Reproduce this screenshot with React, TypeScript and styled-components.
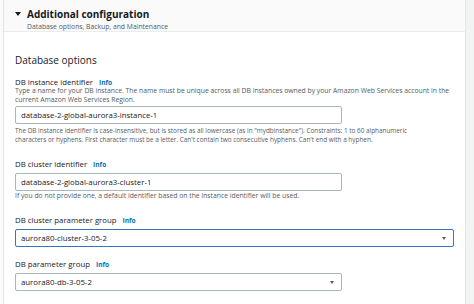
import { FC } from 'react';
import styled, { createGlobalStyle } from 'styled-components';

const GlobalStyle = createGlobalStyle`
  html, body {
    margin: 0;
    padding: 0;
    background: #f2f3f3;
  }
  body {
    font-family: 'Open Sans', 'Noto Sans', Arial, sans-serif;
    color: #16191f;
  }
`;

const Page = styled.div`
  display: flex;
  height: 304px;
  padding: 0 9px 0 3px;
  background: linear-gradient(to right, #fafafa 0, #fafafa 3px, #f2f3f3 3px);
  overflow: hidden;
`;

const Panel = styled.section`
  flex: 1;
  display: flex;
  flex-direction: column;
  background: #ffffff;
  border-left: 1px solid #e4e7e7;
  border-right: 1px solid #e4e7e7;
`;

const Header = styled.header`
  display: flex;
  align-items: flex-start;
  gap: 6px;
  height: 43px;
  box-sizing: border-box;
  padding: 8px 11px 0 11px;
  background: #fafafa;
  border-bottom: 1px solid #eaeded;
`;

const Caret = styled.span`
  width: 0;
  height: 0;
  margin-top: 4px;
  border-left: 3px solid transparent;
  border-right: 3px solid transparent;
  border-top: 4px solid #16191f;
`;

const HeaderText = styled.div`
  display: flex;
  flex-direction: column;
`;

const Title = styled.h2`
  margin: 0;
  font-size: 10px;
  line-height: 13px;
  font-weight: 700;
  color: #16191f;
`;

const Subtitle = styled.p`
  margin: 1px 0 0;
  font-size: 6.8px;
  line-height: 9px;
  color: #545b64;
`;

const Body = styled.div`
  display: flex;
  flex-direction: column;
  padding: 21px 11px 0 11px;
`;

const SectionTitle = styled.h3`
  margin: 0 0 11px;
  font-size: 10px;
  line-height: 14px;
  font-weight: 400;
  color: #16191f;
`;

const Field = styled.div<{ $gap?: number }>`
  display: flex;
  flex-direction: column;
  margin-bottom: ${(p) => p.$gap ?? 15}px;
`;

const LabelRow = styled.div`
  display: flex;
  align-items: baseline;
  gap: 6px;
  margin-bottom: 4px;
`;

const Label = styled.label`
  font-size: 7.8px;
  line-height: 9px;
  font-weight: 500;
  color: #16191f;
`;

const Info = styled.a`
  font-size: 6.6px;
  line-height: 9px;
  font-weight: 700;
  color: #0073bb;
  text-decoration: none;
`;

const Hint = styled.p<{ $mt?: number; $mb?: number; $size?: number }>`
  margin: ${(p) => p.$mt ?? 0}px 0 ${(p) => p.$mb ?? 0}px;
  font-size: ${(p) => p.$size ?? 6.8}px;
  line-height: 9px;
  color: #545b64;
  white-space: nowrap;
`;

const Box = styled.div<{ $width: number; $focused?: boolean }>`
  display: flex;
  align-items: center;
  justify-content: space-between;
  width: ${(p) => p.$width}px;
  height: 18px;
  box-sizing: border-box;
  padding: 0 7px 0 5px;
  border: 1px solid ${(p) => (p.$focused ? '#2f78bd' : '#aab7b8')};
  border-radius: 2px;
  background: #ffffff;
  font-size: 7.8px;
  color: #16191f;
`;

const Arrow = styled.span`
  width: 0;
  height: 0;
  border-left: 2.5px solid transparent;
  border-right: 2.5px solid transparent;
  border-top: 3px solid #545b64;
`;

const InfoLink: FC = () => <Info href="#">Info</Info>;

const App: FC = () => (
  <>
    <GlobalStyle />
    <Page>
      <Panel>
        <Header>
          <Caret />
          <HeaderText>
            <Title>Additional configuration</Title>
            <Subtitle>Database options, Backup, and Maintenance</Subtitle>
          </HeaderText>
        </Header>
        <Body>
          <SectionTitle>Database options</SectionTitle>

          <Field $gap={16}>
            <LabelRow>
              <Label>DB instance identifier</Label>
              <InfoLink />
            </LabelRow>
            <Hint $mt={-5} $mb={2}>
              Type a name for your DB instance. The name must be unique across all DB instances owned by your
              Amazon Web Services account in the
              <br />
              current Amazon Web Services Region.
            </Hint>
            <Box $width={327}>database-2-global-aurora3-instance-1</Box>
            <Hint $mt={2} $size={6.4}>
              The DB instance identifier is case-insensitive, but is stored as all lowercase (as in
              "mydbinstance"). Constraints: 1 to 60 alphanumeric
              <br />
              characters or hyphens. First character must be a letter. Can't contain two consecutive hyphens.
              Can't end with a hyphen.
            </Hint>
          </Field>

          <Field $gap={16}>
            <LabelRow>
              <Label>DB cluster identifier</Label>
              <InfoLink />
            </LabelRow>
            <Box $width={327}>database-2-global-aurora3-cluster-1</Box>
            <Hint>
              If you do not provide one, a default identifier based on the instance identifier will be used.
            </Hint>
          </Field>

          <Field $gap={13}>
            <LabelRow>
              <Label>DB cluster parameter group</Label>
              <InfoLink />
            </LabelRow>
            <Box $width={439} $focused>
              aurora80-cluster-3-05-2
              <Arrow />
            </Box>
          </Field>

          <Field>
            <LabelRow>
              <Label>DB parameter group</Label>
              <InfoLink />
            </LabelRow>
            <Box $width={327}>
              aurora80-db-3-05-2
              <Arrow />
            </Box>
          </Field>
        </Body>
      </Panel>
    </Page>
  </>
);

export default App;
